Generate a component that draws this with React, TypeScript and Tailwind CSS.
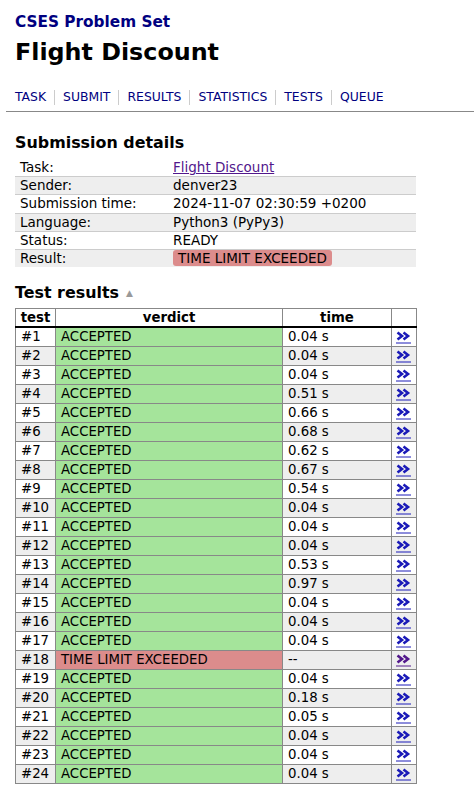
import React from "react";

const details: [string, React.ReactNode][] = [
  ["Task:", <a className="text-[#52188c] underline">Flight Discount</a>],
  ["Sender:", "denver23"],
  ["Submission time:", "2024-11-07 02:30:59 +0200"],
  ["Language:", "Python3 (PyPy3)"],
  ["Status:", "READY"],
  [
    "Result:",
    <span className="rounded-[3px] bg-[#dc8c8c] px-[5px]">TIME LIMIT EXCEEDED</span>,
  ],
];

const times = [
  "0.04", "0.04", "0.04", "0.51", "0.66", "0.68", "0.62", "0.67", "0.54", "0.04",
  "0.04", "0.04", "0.53", "0.97", "0.04", "0.04", "0.04", "--", "0.04", "0.18",
  "0.05", "0.04", "0.04", "0.04",
];

const nav = ["TASK", "SUBMIT", "RESULTS", "STATISTICS", "TESTS", "QUEUE"];

function Chevrons({ visited }: { visited?: boolean }) {
  const c = visited ? "#52188c" : "#1a1ab8";
  return (
    <svg width="15" height="13" viewBox="0 0 15 13" className="inline-block align-middle">
      <polyline points="1.5,1.5 6,5 1.5,8.5" fill="none" stroke={c} strokeWidth="2.6" />
      <polyline points="7.5,1.5 12,5 7.5,8.5" fill="none" stroke={c} strokeWidth="2.6" />
      <line x1="0" y1="12" x2="15" y2="12" stroke={c} strokeWidth="1" />
    </svg>
  );
}

export default function App() {
  return (
    <div className="min-h-screen bg-white text-black" style={{ fontFamily: '"DejaVu Sans", Verdana, sans-serif' }}>
      <div className="px-[15px] pt-[12px]">
        <div className="text-[15.3px] font-bold leading-[20px] text-[#000080]">CSES Problem Set</div>
        <h1 className="mt-[5px] text-[23.8px] font-bold leading-[30px]">Flight Discount</h1>
      </div>
      <div className="mt-[22px] ml-[6px] border-b border-[#888] pb-[6px] pl-[9px]">
        <div className="flex items-center text-[12.4px] leading-[16px] text-[#000080]">
          {nav.map((n, i) => (
            <React.Fragment key={n}>
              {i > 0 && <span className="mx-[8px] h-[15px] w-px bg-[#ccc]" />}
              <a>{n}</a>
            </React.Fragment>
          ))}
        </div>
      </div>

      <div className="px-[15px]">
        <h2 className="mt-[20px] text-[15.9px] font-bold leading-[22px]">Submission details</h2>
        <table className="mt-[5px] w-[401px] border-collapse text-[13.5px] leading-[17.2px]">
          <tbody>
            {details.map(([k, v], i) => (
              <tr key={k} className={(i % 2 ? "bg-[#eee] " : "bg-white ") + (i > 0 ? "border-t border-[#ccc]" : "")}>
                <td className="w-[158px] py-0 pl-[5px]">{k}</td>
                <td className="py-0">{v}</td>
              </tr>
            ))}
          </tbody>
        </table>

        <h2 className="mt-[15px] flex items-center text-[15.9px] font-bold leading-[22px]">
          Test results
          <span className="ml-[7px] text-[9px] text-[#999]">▲</span>
        </h2>
        <table className="mt-[4px] w-[401px] table-fixed border-collapse text-[13.3px] leading-[18px]">
          <colgroup>
            <col className="w-[40px]" />
            <col className="w-[227px]" />
            <col className="w-[109px]" />
            <col className="w-[25px]" />
          </colgroup>
          <thead>
            <tr className="leading-[17px]">
              <th className="border border-[#888] border-b-2 border-b-black font-bold">test</th>
              <th className="border border-[#888] border-b-2 border-b-black font-bold">verdict</th>
              <th className="border border-[#888] border-b-2 border-b-black font-bold">time</th>
              <th className="border border-[#888] border-b-2 border-b-black"></th>
            </tr>
          </thead>
          <tbody>
            {times.map((t, i) => {
              const tle = t === "--";
              const bg = i % 2 ? "bg-[#eee]" : "bg-white";
              return (
                <tr key={i}>
                  <td className={"border border-[#888] px-[5px] " + bg}>#{i + 1}</td>
                  <td className={"border border-[#888] px-[5px] " + (tle ? "bg-[#dc8c8c]" : "bg-[#a5e49b]")}>
                    {tle ? "TIME LIMIT EXCEEDED" : "ACCEPTED"}
                  </td>
                  <td className={"border border-[#888] px-[5px] " + bg}>{tle ? "--" : t + " s"}</td>
                  <td className={"border border-[#888] px-[4px] " + bg}>
                    <a className="flex">
                      <Chevrons visited={tle} />
                    </a>
                  </td>
                </tr>
              );
            })}
          </tbody>
        </table>
      </div>
    </div>
  );
}
